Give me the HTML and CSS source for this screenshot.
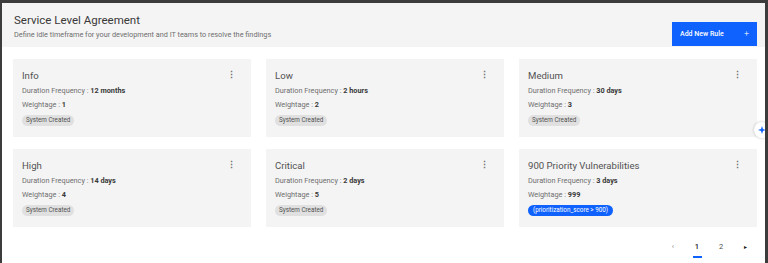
FILE: index.html
```html
<!DOCTYPE html>
<html lang="en-US">
<head>
     <meta charset="UTF-8">
     <meta name="viewport" content="width=device-width, initial-scale=1.0">
     <title>Service Level Agreement</title>
     <link rel="stylesheet" href="styles.css">
</head>
<body>
     <div class="frame">
          <div class="header">
               <div class="header-text">
                    <h1 class="title">Service Level Agreement</h1>
                    <p class="subtitle">Define idle timeframe for your development and IT teams to resolve the findings</p>
               </div>
               <button type="button" class="add-btn"><span>Add New Rule</span><span class="plus">+</span></button>
          </div>

          <div class="cards">
               <div class="card">
                    <div class="card-head"><span class="card-title">Info</span><span class="kebab">&#8942;</span></div>
                    <div class="line">Duration Frequency : <b>12 months</b></div>
                    <div class="line">Weightage : <b>1</b></div>
                    <span class="tag">System Created</span>
               </div>
               <div class="card">
                    <div class="card-head"><span class="card-title">Low</span><span class="kebab">&#8942;</span></div>
                    <div class="line">Duration Frequency : <b>2 hours</b></div>
                    <div class="line">Weightage : <b>2</b></div>
                    <span class="tag">System Created</span>
               </div>
               <div class="card">
                    <div class="card-head"><span class="card-title">Medium</span><span class="kebab">&#8942;</span></div>
                    <div class="line">Duration Frequency : <b>30 days</b></div>
                    <div class="line">Weightage : <b>3</b></div>
                    <span class="tag">System Created</span>
               </div>
               <div class="card">
                    <div class="card-head"><span class="card-title">High</span><span class="kebab">&#8942;</span></div>
                    <div class="line">Duration Frequency : <b>14 days</b></div>
                    <div class="line">Weightage : <b>4</b></div>
                    <span class="tag">System Created</span>
               </div>
               <div class="card">
                    <div class="card-head"><span class="card-title">Critical</span><span class="kebab">&#8942;</span></div>
                    <div class="line">Duration Frequency : <b>2 days</b></div>
                    <div class="line">Weightage : <b>5</b></div>
                    <span class="tag">System Created</span>
               </div>
               <div class="card">
                    <div class="card-head"><span class="card-title">900 Priority Vulnerabilities</span><span class="kebab">&#8942;</span></div>
                    <div class="line">Duration Frequency : <b>3 days</b></div>
                    <div class="line">Weightage : <b>999</b></div>
                    <span class="tag tag-blue">(prioritization_score &gt; 900)</span>
               </div>
          </div>

          <div class="pager">
               <span class="pg-arrow">&#8249;</span>
               <span class="pg-num active">1</span>
               <span class="pg-num">2</span>
               <span class="pg-arrow dark">&#9656;</span>
          </div>

          <div class="assist">
               <svg width="8" height="8" viewBox="0 0 8 8"><path d="M4 0 L5 3 L8 4 L5 5 L4 8 L3 5 L0 4 L3 3 Z" fill="#0f62fe"/></svg>
          </div>
     </div>
</body>
</html>
```

FILE: styles.css
```css
body {
     margin: 0;
     background: #3c3c3c;
     font-family: Roboto, "Liberation Sans", sans-serif;
     overflow: hidden;
}

.frame {
     position: relative;
     margin: 3px 3px 0 2px;
     height: 260px;
     background: #ffffff;
     overflow: hidden;
}

.header {
     display: flex;
     justify-content: space-between;
     align-items: flex-end;
     height: 44px;
     padding: 0 8px 0 12px;
     background: #f4f4f4;
}

.header-text {
     align-self: flex-start;
     padding-top: 10px;
}

.title {
     margin: 0;
     font-size: 11.5px;
     line-height: 14px;
     font-weight: 400;
     color: #393939;
}

.subtitle {
     margin: 4px 0 0;
     font-size: 7.3px;
     line-height: 8px;
     color: #6f6f6f;
}

.add-btn {
     display: flex;
     justify-content: space-between;
     align-items: center;
     width: 85px;
     height: 24px;
     margin-bottom: 1px;
     padding: 0 8px;
     border: 0;
     background: #0f62fe;
     color: #ffffff;
     font-family: inherit;
     font-size: 7px;
     font-weight: 500;
}

.plus {
     font-size: 9px;
     font-weight: 300;
}

.cards {
     display: grid;
     grid-template-columns: repeat(3, 238px);
     column-gap: 15px;
     row-gap: 12px;
     padding: 12px 0 0 11px;
}

.card {
     height: 78px;
     box-sizing: border-box;
     padding: 9px 9px 0;
     background: #f4f4f4;
}

.card-head {
     display: flex;
     justify-content: space-between;
     align-items: center;
     height: 14px;
     margin-bottom: 1px;
}

.card-title {
     font-size: 9.6px;
     color: #525252;
}

.kebab {
     margin-right: 6px;
     font-size: 9px;
     font-weight: 700;
     color: #6f6f6f;
}

.line {
     margin-top: 4px;
     font-size: 7.3px;
     line-height: 10px;
     color: #6f6f6f;
}

.line b {
     color: #393939;
     font-weight: 700;
}

.tag {
     display: block;
     width: fit-content;
     margin-top: 5px;
     height: 11px;
     padding: 0 4px;
     border-radius: 6px;
     background: #e0e0e0;
     color: #525252;
     font-size: 6.3px;
     line-height: 11px;
}

.tag-blue {
     background: #0f62fe;
     color: #ffffff;
     padding: 0 5px;
}

.pager {
     display: flex;
     justify-content: flex-end;
     padding: 14px 8px 0 0;
}

.pg-arrow,
.pg-num {
     position: relative;
     width: 24px;
     text-align: center;
     font-size: 7.5px;
     line-height: 12px;
     color: #525252;
}

.pg-arrow {
     color: #8d8d8d;
}

.pg-arrow.dark {
     color: #161616;
     font-size: 6px;
}

.pg-num.active {
     color: #161616;
     font-weight: 500;
}

.pg-num.active::after {
     content: "";
     position: absolute;
     left: 8px;
     bottom: -5px;
     width: 9px;
     height: 2px;
     background: #0f62fe;
}

.assist {
     position: absolute;
     left: 752px;
     top: 119px;
     display: flex;
     align-items: center;
     justify-content: center;
     width: 16px;
     height: 16px;
     border-radius: 50%;
     background: #ffffff;
     box-shadow: 0 0 3px rgba(0, 0, 0, 0.25);
}
```
